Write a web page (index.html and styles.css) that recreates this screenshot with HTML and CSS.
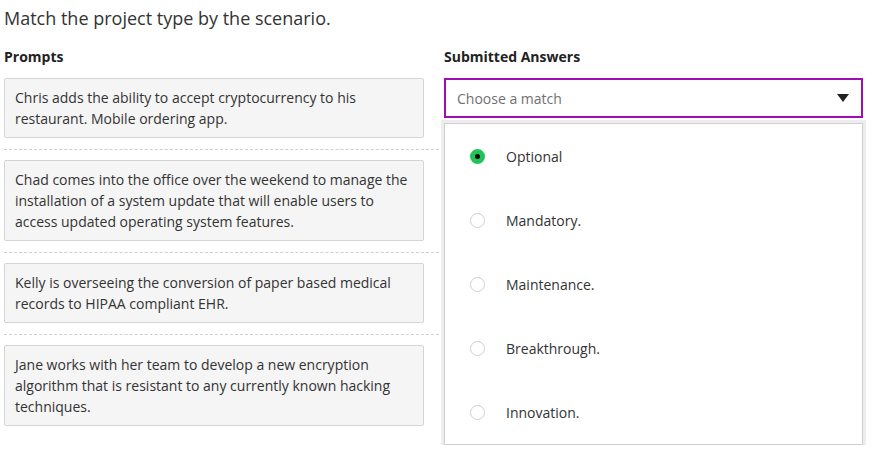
FILE: index.html
```html
<!DOCTYPE html>
<html lang="en">
  <head>
    <meta charset="UTF-8" />
    <meta name="viewport" content="width=device-width, initial-scale=1.0" />
    <title>Matching</title>

    <link rel="stylesheet" href="styles.css">
  </head>
  <body>
    <div id="Question">
      <h1 class="title">Match the project type by the scenario.</h1>

      <div class="columns">
        <div class="prompts">
          <h2 class="label">Prompts</h2>
          <div class="prompt">
            Chris adds the ability to accept cryptocurrency to his restaurant. Mobile ordering app.
          </div>
          <div class="sep"></div>
          <div class="prompt">
            Chad comes into the office over the weekend to manage the installation of a system update that will enable users to access updated operating system features.
          </div>
          <div class="sep"></div>
          <div class="prompt">
            Kelly is overseeing the conversion of paper based medical records to HIPAA compliant EHR.
          </div>
          <div class="sep"></div>
          <div class="prompt">
            Jane works with her team to develop a new encryption algorithm that is resistant to any currently known hacking techniques.
          </div>
        </div>

        <div class="answers">
          <h2 class="label">Submitted Answers</h2>
          <div class="select">
            <span class="placeholder">Choose a match</span>
            <span class="caret"></span>
          </div>
          <ul class="menu">
            <li class="option"><span class="radio checked"></span>Optional</li>
            <li class="option"><span class="radio"></span>Mandatory.</li>
            <li class="option"><span class="radio"></span>Maintenance.</li>
            <li class="option"><span class="radio"></span>Breakthrough.</li>
            <li class="option"><span class="radio"></span>Innovation.</li>
          </ul>
        </div>
      </div>
    </div>
  </body>
</html>
```

FILE: styles.css
```css
body {
  margin: 0;
  background-color: white;
  font-family: "Open Sans", "Liberation Sans", sans-serif;
  color: #333;
}
#Question {
  padding: 4px 0 0 4px;
}
.title {
  margin: 0;
  font-size: 18px;
  font-weight: normal;
  line-height: 28px;
  color: #333;
}
.columns {
  display: flex;
  margin-top: 16px;
}
.label {
  margin: 0 0 12px 0;
  font-size: 14px;
  font-weight: bold;
  line-height: 18px;
  color: #222;
}
.prompts {
  width: 440px;
}
.prompt {
  width: 420px;
  box-sizing: border-box;
  padding: 8px 10px;
  background-color: #f5f5f5;
  border: solid 1px #d4d4d4;
  border-radius: 2px;
  font-size: 14px;
  line-height: 21px;
  color: #333;
}
.sep {
  margin: 11px 0 10px 0;
  border-top: dashed 1px #cfcfcf;
}
.answers {
  width: 419px;
}
.select {
  display: flex;
  align-items: center;
  justify-content: space-between;
  height: 40px;
  box-sizing: border-box;
  padding: 0 12px 0 11px;
  border: solid 2px #a20cb6;
}
.placeholder {
  font-size: 14px;
  color: #707070;
}
.caret {
  width: 0;
  height: 0;
  border-left: solid 6px transparent;
  border-right: solid 6px transparent;
  border-top: solid 8px #222;
}
.menu {
  list-style: none;
  margin: 5px 0 0 0;
  padding: 0;
  background-color: white;
  border: solid 1px #cfcfcf;
  box-shadow: 0 0 0 3px #ededed;
}
.option {
  display: flex;
  align-items: center;
  height: 64px;
  padding-left: 25px;
  font-size: 14px;
  color: #333;
}
.radio {
  width: 15px;
  height: 15px;
  box-sizing: border-box;
  margin-right: 21px;
  border: solid 1px #d0d0d0;
  border-radius: 50%;
  background-color: white;
}
.radio.checked {
  border: solid 5.5px #1ec45a;
  background-color: black;
}
```
